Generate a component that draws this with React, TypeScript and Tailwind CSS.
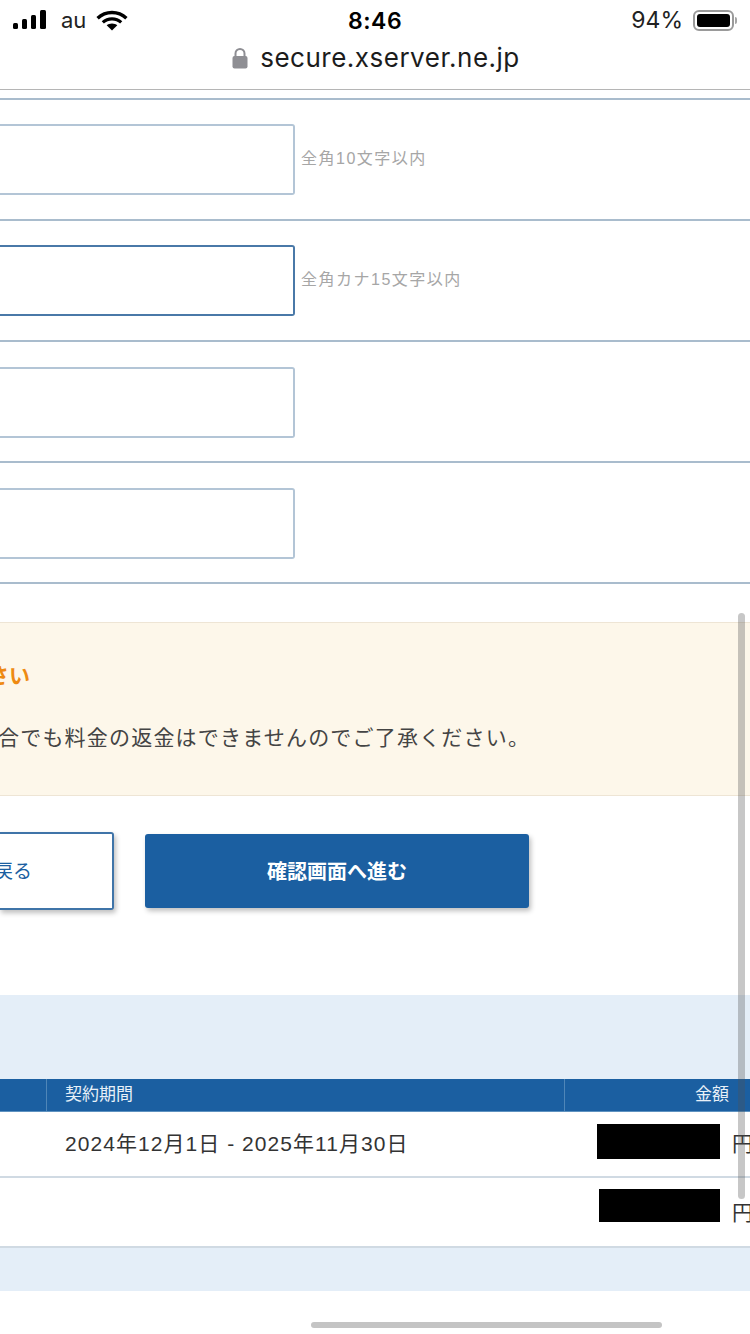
const SANS = "font-['Liberation_Sans','Noto_Sans_CJK_JP',sans-serif]";
const STATUS_FONT = "font-['Inter','Liberation_Sans',sans-serif]";

function SignalIcon() {
  return (
    <svg width="34" height="20" viewBox="0 0 34 20" className="block">
      <rect x="0" y="13" width="5" height="6" rx="1.5" fill="#000" />
      <rect x="9" y="9" width="5" height="10" rx="1.5" fill="#000" />
      <rect x="18" y="5" width="5" height="14" rx="1.5" fill="#000" />
      <rect x="27" y="0" width="6" height="19" rx="1.5" fill="#000" />
    </svg>
  );
}

function WifiIcon() {
  return (
    <svg width="32" height="22" viewBox="0 0 32 22" className="block">
      <path d="M16 3.5c-5.6 0-10.6 2.2-14.4 5.8" fill="none" stroke="#000" strokeWidth="3.4" />
      <path d="M16 3.5c5.6 0 10.6 2.2 14.4 5.8" fill="none" stroke="#000" strokeWidth="3.4" />
      <path d="M6.8 13.4c2.5-2.3 5.7-3.6 9.2-3.6s6.7 1.3 9.2 3.6" fill="none" stroke="#000" strokeWidth="3.2" />
      <path d="M16 21.5l-5.3-5.2c1.4-1.2 3.2-1.9 5.3-1.9s3.9.7 5.3 1.9z" fill="#000" />
    </svg>
  );
}

function LockIcon() {
  return (
    <svg width="16" height="21" viewBox="0 0 16 21" className="block">
      <path d="M3.5 9V5.5a4.5 4.5 0 0 1 9 0V9" fill="none" stroke="#8e8e93" strokeWidth="2" />
      <rect x="0.5" y="8" width="15" height="12.5" rx="2" fill="#8e8e93" />
    </svg>
  );
}

function Battery() {
  return (
    <div className="flex items-center">
      <div className="w-[41px] h-[21px] rounded-[6px] border-2 border-[#9a9a9a] p-[2px]">
        <div className="w-[33px] h-full rounded-[3px] bg-black" />
      </div>
      <div className="w-[2px] h-[7px] ml-[1px] rounded-r-sm bg-[#a5a5a5]" />
    </div>
  );
}

function FormRow({ hint, focused, low }: { hint?: string; focused?: boolean; low?: boolean }) {
  return (
    <div className="h-[121px] border-b-2 border-[#a9bccd] flex items-center">
      <div
        className={
          focused
            ? "w-[295px] h-[71px] border-2 border-l-0 rounded-r-[3px] border-[#4a79a8]"
            : low
              ? "w-[295px] h-[71px] mt-[2px] border-2 border-l-0 rounded-r-[3px] border-[#b3c5d6]"
              : "w-[295px] h-[71px] border-2 border-l-0 rounded-r-[3px] border-[#b3c5d6]"
        }
      />
      {hint && <span className="ml-[6px] text-[16px] tracking-[1.5px] text-[#a6a6a6] -mt-[1px]">{hint}</span>}
    </div>
  );
}

export default function App() {
  return (
    <div className={`relative w-[750px] h-[1334px] overflow-hidden bg-white ${SANS}`}>
      {/* Status bar */}
      <div className={`relative h-[40px] flex items-center justify-between text-black ${STATUS_FONT}`}>
        <div className="flex items-center pl-[13px]">
          <SignalIcon />
          <span className="ml-[14px] text-[22px] leading-none text-[#222]">au</span>
          <span className="ml-[10px]">
            <WifiIcon />
          </span>
        </div>
        <span className="absolute left-[348px] top-[8px] text-[23px] leading-[26px] font-semibold tracking-[0.5px]">8:46</span>
        <div className="flex items-center pr-[13px]">
          <span className="text-[23px] leading-none text-[#222] mr-[10px]">94%</span>
          <Battery />
        </div>
      </div>

      {/* Address bar */}
      <div className={`h-[50px] border-b border-[#b5b5b5] flex items-start justify-center pl-[2px] ${STATUS_FONT}`}>
        <div className="flex items-center gap-[12px] pt-[1px]">
          <LockIcon />
          <span className="text-[26px] leading-[34px] tracking-[0.5px] text-[#1c1c1c]">secure.xserver.ne.jp</span>
        </div>
      </div>

      {/* Form rows */}
      <div className="mt-[8px] border-t-2 border-[#a9bccd]">
        <FormRow hint="全角10文字以内" />
        <FormRow hint="全角カナ15文字以内" focused />
        <FormRow low />
        <FormRow low />
      </div>

      {/* Notice */}
      <div className="mt-[38px] h-[174px] bg-[#fdf7ea] border-y border-[#eee5d5] overflow-hidden">
        <p className="mt-[37px] -ml-[117px] text-[21px] leading-[32px] font-bold text-[#ee8a12] whitespace-nowrap">ご注意ください</p>
        <p className="mt-[30px] -ml-[2px] text-[21px] leading-[32px] tracking-[1.2px] text-[#444] whitespace-nowrap">
          合でも料金の返金はできませんのでご了承ください。
        </p>
      </div>

      {/* Buttons */}
      <div className="mt-[36px] flex items-center">
        <div className="w-[115px] h-[78px] -ml-[1px] border-2 border-l-0 rounded-r-[3px] border-[#3f74a8] bg-white shadow-[2px_3px_5px_rgba(0,0,0,0.25)] flex items-center text-[19px] text-[#1b5fa1] overflow-hidden whitespace-nowrap">
          <span className="-ml-[5px] mt-[2px]">戻る</span>
        </div>
        <div className="ml-[31px] w-[384px] h-[74px] rounded-[3px] bg-[#1b5fa1] shadow-[2px_3px_5px_rgba(0,0,0,0.25)] flex items-center justify-center text-[20px] leading-[30px] pt-[1px] font-bold text-white">
          確認画面へ進む
        </div>
      </div>

      {/* Summary table */}
      <div className="mt-[85px] h-[84px] bg-[#e4eef8]" />
      <div className="h-[33px] bg-[#1b5fa1] border-b border-[#5e92c0] flex text-[17px] text-[#e8f0f8]">
        <div className="w-[47px] border-r border-[#4f86b8]" />
        <div className="w-[518px] border-r border-[#4f86b8] pl-[18px] leading-[31px]">契約期間</div>
        <div className="flex-1 text-right pr-[21px] leading-[31px]">金額</div>
      </div>
      <div className="h-[66px] border-b-2 border-[#d0dae3] flex items-center text-[21px] text-[#333]">
        <span className="ml-[65px] flex-1 whitespace-nowrap tracking-[1.05px]">2024年12月1日 - 2025年11月30日</span>
        <div className="w-[123px] h-[35px] bg-black -mt-[5px]" />
        <span className="ml-[12px] mr-[-2px] w-[20px] overflow-hidden whitespace-nowrap">円</span>
      </div>
      <div className="h-[70px] border-b-2 border-[#d0dae3] flex items-center justify-end text-[21px] text-[#333]">
        <div className="w-[121px] h-[33px] bg-black -mt-[14px]" />
        <span className="ml-[12px] mr-[-2px] w-[20px] mt-[1px] overflow-hidden whitespace-nowrap">円</span>
      </div>
      <div className="h-[43px] bg-[#e4eef8]" />

      {/* Browser overlays */}
      <div className="absolute left-[738px] top-[613px] w-[7px] h-[586px] rounded-full bg-[rgba(80,80,80,0.32)]" />
      <div className="absolute left-[311px] top-[1322px] w-[351px] h-[6px] rounded-full bg-[#c4c4c4]" />
    </div>
  );
}
